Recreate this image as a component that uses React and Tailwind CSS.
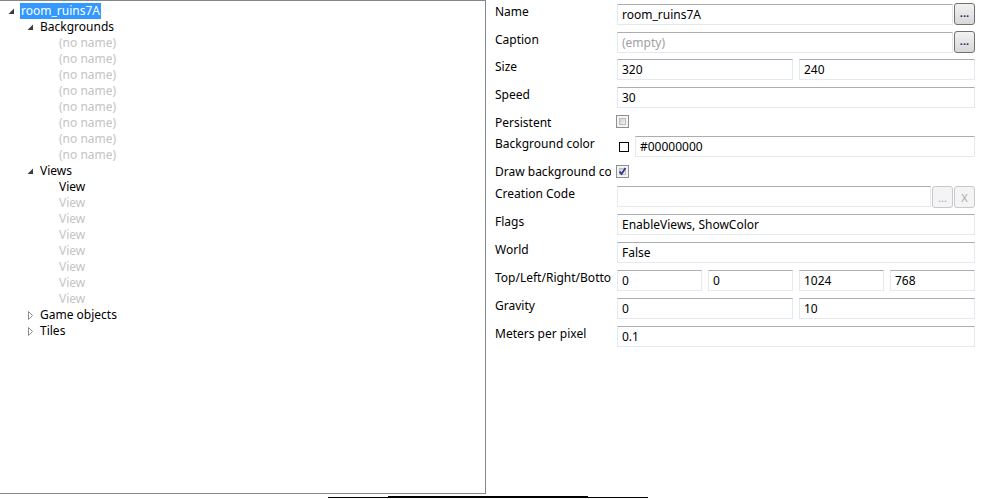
const FONT = { fontFamily: '"Noto Sans", "Open Sans", sans-serif' };

const tree = [
  { level: 0, text: "room_ruins7A", exp: "open", selected: true },
  { level: 1, text: "Backgrounds", exp: "open" },
  ...Array(8).fill(0).map(() => ({ level: 2, text: "(no name)", dim: true })),
  { level: 1, text: "Views", exp: "open" },
  { level: 2, text: "View" },
  ...Array(7).fill(0).map(() => ({ level: 2, text: "View", dim: true })),
  { level: 1, text: "Game objects", exp: "closed" },
  { level: 1, text: "Tiles", exp: "closed" },
];

function Expander({ state }) {
  if (state === "open") {
    return (
      <svg width="7" height="7" viewBox="0 0 7 7">
        <polygon points="6,0.5 6,6 0.5,6" fill="#3c3c3c" />
      </svg>
    );
  }
  if (state === "closed") {
    return (
      <svg width="6" height="9" viewBox="0 0 6 9">
        <polygon points="0.5,0.5 4.5,4.5 0.5,8.5" fill="#fff" stroke="#8c8c8c" strokeWidth="1" />
      </svg>
    );
  }
  return null;
}

function TreeRow({ row }) {
  return (
    <div className="flex items-center h-[16px]" style={{ paddingLeft: row.level * 19 + 3 }}>
      <div className="w-[17px] flex items-center justify-center">
        <Expander state={row.exp} />
      </div>
      <span
        className={
          "px-[1px] h-[16px] leading-[16px] text-[12px] whitespace-nowrap " +
          (row.selected ? "bg-[#3399ff] text-white" : row.dim ? "text-[#c4c4c4]" : "text-black")
        }
      >
        {row.text}
      </span>
    </div>
  );
}

function Field({ value, placeholder, className = "" }) {
  return (
    <div
      className={
        "h-[21px] flex items-center px-[4px] border border-[#e3e9ef] border-t-[#abadb3] bg-white text-[12px] whitespace-nowrap overflow-hidden " +
        className
      }
    >
      {value ? <span className="text-black">{value}</span> : <span className="text-[#a0a0a0]">{placeholder}</span>}
    </div>
  );
}

function DotsButton({ disabled, label = "..." }) {
  return (
    <div
      className={
        "w-[21px] h-[22px] rounded-[3px] border flex items-center justify-center text-[11px] leading-none " +
        (disabled
          ? "border-[#c5c8cc] bg-[#f4f4f4] text-[#a8a8a8]"
          : "border-[#707070] bg-gradient-to-b from-[#f2f2f2] to-[#d8d8d8] text-[#1c2c6c] font-bold")
      }
    >
      <span className={disabled ? "" : "-mt-[4px]"}>{label}</span>
    </div>
  );
}

function CheckBox({ checked }) {
  return (
    <div className="w-[13px] h-[13px] border border-[#8e8f8f] bg-[#f4f4f4] p-[2px]">
      <div className="w-full h-full bg-gradient-to-br from-[#cfcfcf] to-[#f4f4f4] border border-[#bdbdbd] relative">
        {checked && (
          <svg className="absolute -left-[2px] -top-[2px]" width="9" height="9" viewBox="0 0 9 9">
            <path d="M1.5 4.5 L3.5 7 L7.5 1" fill="none" stroke="#2f3a8c" strokeWidth="1.8" />
          </svg>
        )}
      </div>
    </div>
  );
}

const rows = [
  { label: "Name", h: 28, body: (
    <div className="flex items-start gap-[1px]">
      <Field value="room_ruins7A" className="flex-1" />
      <div className="-mt-[1px]"><DotsButton /></div>
    </div>
  ) },
  { label: "Caption", h: 27, body: (
    <div className="flex items-start gap-[1px]">
      <Field placeholder="(empty)" className="flex-1" />
      <div className="-mt-[1px]"><DotsButton /></div>
    </div>
  ) },
  { label: "Size", h: 28, body: (
    <div className="grid grid-cols-2 gap-[6px]">
      <Field value="320" />
      <Field value="240" />
    </div>
  ) },
  { label: "Speed", h: 28, body: <Field value="30" /> },
  { label: "Persistent", h: 21, body: <div className="-ml-[1px]"><CheckBox /></div> },
  { label: "Background color", h: 28, body: (
    <div className="flex items-center">
      <div className="ml-[2px] w-[10px] h-[10px] border border-black bg-white" />
      <Field value="#00000000" className="flex-1 ml-[6px]" />
    </div>
  ) },
  { label: "Draw background color", h: 22, body: <div className="-ml-[1px] mt-[1px]"><CheckBox checked /></div> },
  { label: "Creation Code", h: 28, body: (
    <div className="flex items-start gap-[1px]">
      <Field className="flex-1" />
      <DotsButton disabled />
      <DotsButton disabled label="X" />
    </div>
  ) },
  { label: "Flags", h: 28, body: <Field value="EnableViews, ShowColor" /> },
  { label: "World", h: 28, body: <Field value="False" /> },
  { label: "Top/Left/Right/Bottom", h: 28, body: (
    <div className="grid grid-cols-4 gap-[6px]">
      <Field value="0" />
      <Field value="0" />
      <Field value="1024" />
      <Field value="768" />
    </div>
  ) },
  { label: "Gravity", h: 28, body: (
    <div className="grid grid-cols-2 gap-[6px]">
      <Field value="0" />
      <Field value="10" />
    </div>
  ) },
  { label: "Meters per pixel", h: 28, body: <Field value="0.1" /> },
];

export default function App() {
  return (
    <div className="w-[984px] h-[499px] bg-white overflow-hidden" style={FONT}>
      <div className="flex h-[494px]">
        {/* tree */}
        <div className="w-[486px] h-[494px] border-t border-r border-b border-[#828790] pt-[2px]">
          {tree.map((row, i) => (
            <TreeRow key={i} row={row} />
          ))}
        </div>

        {/* properties */}
        <div className="flex-1 pl-[9px] pr-[9px]">
          {rows.map((r, i) => (
            <div key={i} className="flex" style={{ height: r.h }}>
              <div className="w-[116px] pt-[4px] overflow-hidden whitespace-nowrap text-[12px] leading-[16px] text-black">
                {r.label}
              </div>
              <div className="flex-1 pl-[6px] pt-[4px]">{r.body}</div>
            </div>
          ))}
        </div>
      </div>

      <div className="mt-[2px] h-[1px] ml-[388px] w-[200px] bg-black" />
      <div className="h-[1px] ml-[328px] w-[320px] bg-black" />
    </div>
  );
}
